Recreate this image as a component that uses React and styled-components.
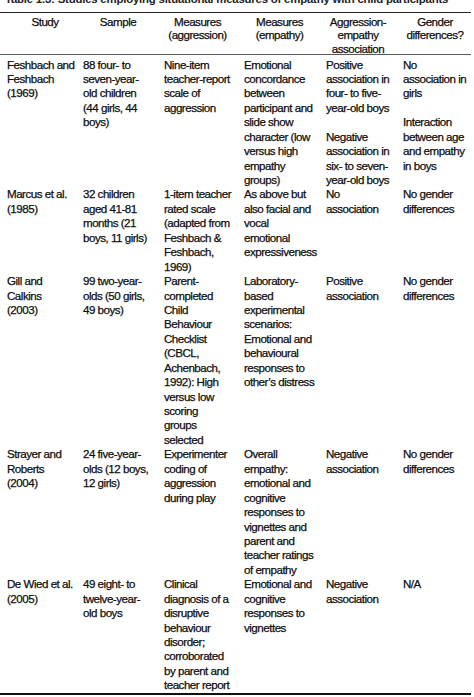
import React from 'react';
import styled, { createGlobalStyle } from 'styled-components';

const GlobalStyle = createGlobalStyle`
  html, body {
    margin: 0;
    padding: 0;
    background: #ffffff;
  }
  body {
    font-family: "Liberation Sans", Arial, sans-serif;
    color: #0e0e0e;
  }
`;

const Page = styled.div`
  width: 474px;
  height: 697px;
  overflow: hidden;
`;

const Caption = styled.div`
  margin-top: -7px;
  padding-left: 5px;
  height: 19px;
  font-size: 11.4px;
  font-weight: bold;
  letter-spacing: -0.2px;
  line-height: 12px;
  white-space: nowrap;
  color: #222;
`;

const Table = styled.div`
  width: 471px;
  border-top: 1px solid #2a2a2a;
  border-bottom: 2px solid #111;
`;

const Grid = styled.div`
  display: grid;
  grid-template-columns: 76px 81px 80px 82px 77px 1fr;
  padding-left: 7px;
`;

const HeadRow = styled(Grid)`
  height: 39px;
  padding-top: 1.5px;
  border-bottom: 1.5px solid #5a5a5a;
  align-items: start;
`;

const textLook = `
  font-size: 11.6px;
  letter-spacing: -0.5px;
  -webkit-text-stroke: 0.25px #0e0e0e;
`;

const HeadCell = styled.div`
  ${textLook}
  text-align: center;
  line-height: 13.5px;
  padding-right: ${p => p.$pad}px;
  white-space: nowrap;
`;

const Body = styled(Grid)`
  padding-top: 3px;
  align-items: start;
`;

const Cell = styled.div`
  ${textLook}
  display: flex;
  flex-direction: column;
  line-height: 14.44px;
`;

const Line = styled.div`
  white-space: nowrap;
  min-height: 14.44px;
`;

const headers = [
  { lines: ['Study'], pad: 0 },
  { lines: ['Sample'], pad: 11 },
  { lines: ['Measures', '(aggression)'], pad: 13 },
  { lines: ['Measures', '(empathy)'], pad: 11 },
  { lines: ['Aggression-', 'empathy', 'association'], pad: 13 },
  { lines: ['Gender', 'differences?'], pad: 4 },
];

const rows = [
  [
    ['Feshbach and', 'Feshbach', '(1969)'],
    ['88 four- to', 'seven-year-', 'old children', '(44 girls, 44', 'boys)'],
    ['Nine-item', 'teacher-report', 'scale of', 'aggression'],
    ['Emotional', 'concordance', 'between', 'participant and', 'slide show', 'character (low', 'versus high', 'empathy', 'groups)'],
    ['Positive', 'association in', 'four- to five-', 'year-old boys', '', 'Negative', 'association in', 'six- to seven-', 'year-old boys'],
    ['No', 'association in', 'girls', '', 'Interaction', 'between age', 'and empathy', 'in boys'],
  ],
  [
    ['Marcus et al.', '(1985)'],
    ['32 children', 'aged 41-81', 'months (21', 'boys, 11 girls)'],
    ['1-item teacher', 'rated scale', '(adapted from', 'Feshbach &', 'Feshbach,', '1969)'],
    ['As above but', 'also facial and', 'vocal', 'emotional', 'expressiveness'],
    ['No', 'association'],
    ['No gender', 'differences'],
  ],
  [
    ['Gill and', 'Calkins', '(2003)'],
    ['99 two-year-', 'olds (50 girls,', '49 boys)'],
    ['Parent-', 'completed', 'Child', 'Behaviour', 'Checklist', '(CBCL,', 'Achenbach,', '1992): High', 'versus low', 'scoring', 'groups', 'selected'],
    ['Laboratory-', 'based', 'experimental', 'scenarios:', 'Emotional and', 'behavioural', 'responses to', 'other\u2019s distress'],
    ['Positive', 'association'],
    ['No gender', 'differences'],
  ],
  [
    ['Strayer and', 'Roberts', '(2004)'],
    ['24 five-year-', 'olds (12 boys,', '12 girls)'],
    ['Experimenter', 'coding of', 'aggression', 'during play'],
    ['Overall', 'empathy:', 'emotional and', 'cognitive', 'responses to', 'vignettes and', 'parent and', 'teacher ratings', 'of empathy'],
    ['Negative', 'association'],
    ['No gender', 'differences'],
  ],
  [
    ['De Wied et al.', '(2005)'],
    ['49 eight- to', 'twelve-year-', 'old boys'],
    ['Clinical', 'diagnosis of a', 'disruptive', 'behaviour', 'disorder;', 'corroborated', 'by parent and', 'teacher report'],
    ['Emotional and', 'cognitive', 'responses to', 'vignettes'],
    ['Negative', 'association'],
    ['N/A'],
  ],
];

const App = () => {
  return (
    <Page>
      <GlobalStyle />
      <Caption>Table 1.3: Studies employing situational measures of empathy with child participants</Caption>
      <Table>
        <HeadRow>
          {headers.map((h, i) => (
            <HeadCell key={`head${i}`} $pad={h.pad}>
              {h.lines.map((l, j) => (
                <div key={`headline${j}`}>{l}</div>
              ))}
            </HeadCell>
          ))}
        </HeadRow>
        <Body>
          {rows.map((row, r) =>
            row.map((cell, c) => (
              <Cell key={`cell${r}-${c}`}>
                {cell.map((l, j) => (
                  <Line key={`line${j}`}>{l}</Line>
                ))}
              </Cell>
            )),
          )}
        </Body>
      </Table>
    </Page>
  );
};

export default App;
